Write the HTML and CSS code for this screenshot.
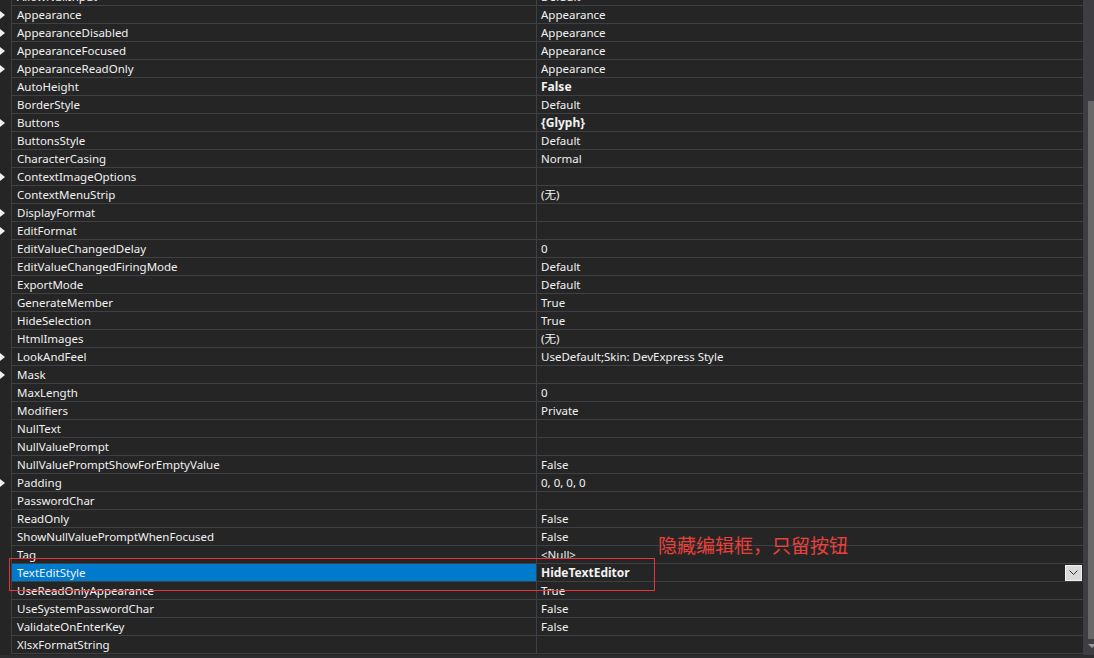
FILE: index.html
```html
<!DOCTYPE html>
<html>
<head>
<meta charset="utf-8">
<link rel="stylesheet" href="styles.css">
</head>
<body>
<div class="frame">
  <div class="grid">
    <div class="rows">
      <div class="row"><div class="gutter"></div><div class="name">AllowNullInput</div><div class="value">Default</div></div>
      <div class="row"><div class="gutter"><span class="arrow"></span></div><div class="name">Appearance</div><div class="value">Appearance</div></div>
      <div class="row"><div class="gutter"><span class="arrow"></span></div><div class="name">AppearanceDisabled</div><div class="value">Appearance</div></div>
      <div class="row"><div class="gutter"><span class="arrow"></span></div><div class="name">AppearanceFocused</div><div class="value">Appearance</div></div>
      <div class="row"><div class="gutter"><span class="arrow"></span></div><div class="name">AppearanceReadOnly</div><div class="value">Appearance</div></div>
      <div class="row"><div class="gutter"></div><div class="name">AutoHeight</div><div class="value bold">False</div></div>
      <div class="row"><div class="gutter"></div><div class="name">BorderStyle</div><div class="value">Default</div></div>
      <div class="row"><div class="gutter"><span class="arrow"></span></div><div class="name">Buttons</div><div class="value bold">{Glyph}</div></div>
      <div class="row"><div class="gutter"></div><div class="name">ButtonsStyle</div><div class="value">Default</div></div>
      <div class="row"><div class="gutter"></div><div class="name">CharacterCasing</div><div class="value">Normal</div></div>
      <div class="row"><div class="gutter"><span class="arrow"></span></div><div class="name">ContextImageOptions</div><div class="value"></div></div>
      <div class="row"><div class="gutter"></div><div class="name">ContextMenuStrip</div><div class="value">(无)</div></div>
      <div class="row"><div class="gutter"><span class="arrow"></span></div><div class="name">DisplayFormat</div><div class="value"></div></div>
      <div class="row"><div class="gutter"><span class="arrow"></span></div><div class="name">EditFormat</div><div class="value"></div></div>
      <div class="row"><div class="gutter"></div><div class="name">EditValueChangedDelay</div><div class="value">0</div></div>
      <div class="row"><div class="gutter"></div><div class="name">EditValueChangedFiringMode</div><div class="value">Default</div></div>
      <div class="row"><div class="gutter"></div><div class="name">ExportMode</div><div class="value">Default</div></div>
      <div class="row"><div class="gutter"></div><div class="name">GenerateMember</div><div class="value">True</div></div>
      <div class="row"><div class="gutter"></div><div class="name">HideSelection</div><div class="value">True</div></div>
      <div class="row"><div class="gutter"></div><div class="name">HtmlImages</div><div class="value">(无)</div></div>
      <div class="row"><div class="gutter"><span class="arrow"></span></div><div class="name">LookAndFeel</div><div class="value">UseDefault;Skin: DevExpress Style</div></div>
      <div class="row"><div class="gutter"><span class="arrow"></span></div><div class="name">Mask</div><div class="value"></div></div>
      <div class="row"><div class="gutter"></div><div class="name">MaxLength</div><div class="value">0</div></div>
      <div class="row"><div class="gutter"></div><div class="name">Modifiers</div><div class="value">Private</div></div>
      <div class="row"><div class="gutter"></div><div class="name">NullText</div><div class="value"></div></div>
      <div class="row"><div class="gutter"></div><div class="name">NullValuePrompt</div><div class="value"></div></div>
      <div class="row"><div class="gutter"></div><div class="name">NullValuePromptShowForEmptyValue</div><div class="value">False</div></div>
      <div class="row"><div class="gutter"><span class="arrow"></span></div><div class="name">Padding</div><div class="value">0, 0, 0, 0</div></div>
      <div class="row"><div class="gutter"></div><div class="name">PasswordChar</div><div class="value"></div></div>
      <div class="row"><div class="gutter"></div><div class="name">ReadOnly</div><div class="value">False</div></div>
      <div class="row"><div class="gutter"></div><div class="name">ShowNullValuePromptWhenFocused</div><div class="value">False</div></div>
      <div class="row"><div class="gutter"></div><div class="name">Tag</div><div class="value">&lt;Null&gt;</div></div>
      <div class="row selected"><div class="gutter"></div><div class="name">TextEditStyle</div><div class="value bold"><span>HideTextEditor</span><span class="drop"><svg width="9" height="5" viewBox="0 0 9 5"><path d="M0.5 0.5 L4.5 4.5 L8.5 0.5" fill="none" stroke="#333" stroke-width="1"/></svg></span></div></div>
      <div class="row"><div class="gutter"></div><div class="name">UseReadOnlyAppearance</div><div class="value">True</div></div>
      <div class="row"><div class="gutter"></div><div class="name">UseSystemPasswordChar</div><div class="value">False</div></div>
      <div class="row"><div class="gutter"></div><div class="name">ValidateOnEnterKey</div><div class="value">False</div></div>
      <div class="row"><div class="gutter"></div><div class="name">XlsxFormatString</div><div class="value"></div></div>
    </div>
  </div>
  <div class="scrollbar">
    <div class="track-top"></div>
    <div class="thumb"></div>
    <div class="down"></div>
  </div>
</div>
<div class="bottom"></div>
<div class="highlight"></div>
<div class="note">隐藏编辑框，只留按钮</div>
</body>
</html>
```

FILE: styles.css
```css
html, body {
  margin: 0;
  padding: 0;
}
body {
  width: 1094px;
  height: 658px;
  overflow: hidden;
  background: #252526;
  font-family: "Noto Sans", "Noto Sans CJK SC", sans-serif;
  font-size: 11.5px;
  color: #f1f1f1;
  position: relative;
}
.frame {
  display: flex;
  height: 655px;
  overflow: hidden;
}
.grid {
  width: 1083px;
  overflow: hidden;
}
.rows {
  margin-top: -12px;
  display: flex;
  flex-direction: column;
}
.row {
  display: flex;
  height: 18px;
}
.gutter {
  width: 11px;
  flex: none;
  display: flex;
  align-items: center;
  border-right: 1px solid #3f3f46;
}
.arrow {
  width: 0;
  height: 0;
  border-top: 4px solid transparent;
  border-bottom: 4px solid transparent;
  border-left: 5px solid #f1f1f1;
  margin-top: -1px;
}
.name {
  width: 519px;
  flex: none;
  padding-left: 5px;
  padding-top: 1px;
  border-right: 1px solid #3f3f46;
  border-bottom: 1px solid #3f3f46;
  line-height: 16px;
  white-space: nowrap;
  overflow: hidden;
}
.value {
  flex: 1;
  display: flex;
  align-items: center;
  padding-left: 4px;
  padding-top: 1px;
  border-bottom: 1px solid #3f3f46;
  line-height: 16px;
  white-space: nowrap;
}
.bold {
  font-weight: 700;
  font-size: 12px;
}
.selected .name {
  background: #007acc;
}
.drop {
  margin-left: auto;
  margin-right: 1px;
  margin-top: -1px;
  width: 15px;
  height: 14px;
  background: #d9d9d9;
  border: 1px solid #f0f0f0;
  display: flex;
  align-items: center;
  justify-content: center;
}
.scrollbar {
  width: 11px;
  background: #3e3e42;
  display: flex;
  flex-direction: column;
  align-items: flex-end;
}
.track-top {
  height: 101px;
}
.thumb {
  width: 6px;
  height: 538px;
  background: #686868;
}
.down {
  margin-top: 5px;
  width: 0;
  height: 0;
  border-left: 4px solid transparent;
  border-right: 4px solid transparent;
  border-top: 4px solid #999999;
  margin-right: -2px;
}
.bottom {
  height: 3px;
  background: #2d2d30;
}
.highlight {
  position: absolute;
  left: 9px;
  top: 558px;
  width: 644px;
  height: 31px;
  border: 1px solid #e8353a;
}
.note {
  position: absolute;
  left: 658px;
  top: 532px;
  font-family: "Noto Sans CJK SC", sans-serif;
  font-size: 19px;
  line-height: 26px;
  color: #e8403a;
}
```
